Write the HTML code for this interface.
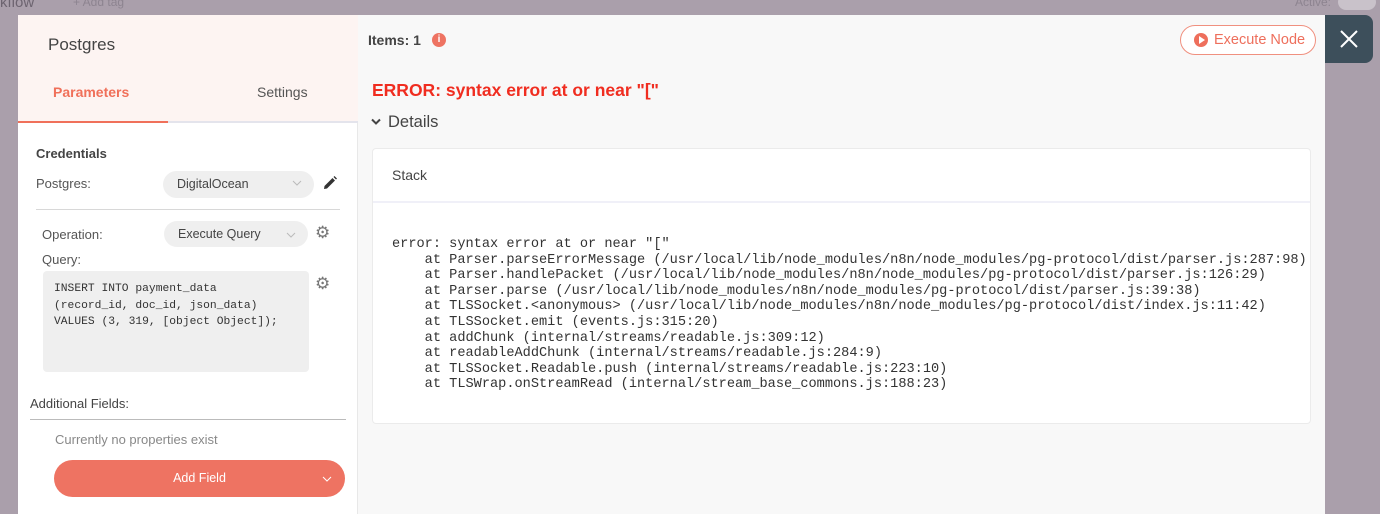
<!DOCTYPE html>
<html><head><meta charset="utf-8"><style>
*{box-sizing:border-box;margin:0;padding:0}
body{width:1380px;height:514px;overflow:hidden;background:#aa9fab;font-family:"Liberation Sans",sans-serif;position:relative;color:#444}
.abs{position:absolute}
.mono{font-family:"Liberation Mono",monospace}
</style></head><body>
<div class="abs" style="left:0;top:-6px;font-size:15px;color:#6d6470">kflow</div>
<div class="abs" style="left:73px;top:-5px;font-size:12px;color:#8d8490">+ Add tag</div>
<div class="abs" style="left:1295px;top:-5px;font-size:12px;color:#8d8490">Active:</div>
<div class="abs" style="left:1338px;top:-6px;width:38px;height:16px;border-radius:8px;background:#c9c2ca"></div>
<div class="abs" style="left:18px;top:15px;width:1307px;height:499px;background:#f8f8f8"></div>
<div class="abs" style="left:18px;top:15px;width:340px;height:499px;background:#fff;border-right:1px solid #e8e8e8"></div>
<div class="abs" style="left:18px;top:15px;width:340px;height:107px;background:#fdf4f2"></div>
<div class="abs" style="left:48px;top:35px;font-size:17px;color:#444">Postgres</div>
<div class="abs" style="left:53px;top:84px;font-size:14px;font-weight:bold;color:#f0705a">Parameters</div>
<div class="abs" style="left:257px;top:84px;font-size:14px;color:#555">Settings</div>
<div class="abs" style="left:18px;top:121px;width:340px;height:2px;background:#e4e4ec"></div>
<div class="abs" style="left:18px;top:121px;width:150px;height:2px;background:#f0705a"></div>
<div class="abs" style="left:36px;top:146px;font-size:13px;font-weight:bold;color:#444">Credentials</div>
<div class="abs" style="left:36px;top:176px;font-size:13px;color:#555">Postgres:</div>
<div class="abs" style="left:163px;top:171px;width:151px;height:27px;border-radius:14px;background:#efefef;font-size:12.5px;color:#444;padding:6px 14px">DigitalOcean<svg style="position:absolute;right:12px;top:9px" width="10" height="6"><path d="M1 1L5 5L9 1" stroke="#bbb" fill="none"/></svg></div>
<svg class="abs" style="left:323px;top:176px" width="14" height="14" viewBox="0 0 14 14"><path d="M1 13 L1.5 10 L9.5 2 L12 4.5 L4 12.5 Z M10.5 1 L11.5 0 L14 2.5 L13 3.5Z" fill="#333"/></svg>
<div class="abs" style="left:36px;top:209px;width:304px;height:1px;background:#d8d8d8"></div>
<div class="abs" style="left:42px;top:227px;font-size:13px;color:#555">Operation:</div>
<div class="abs" style="left:164px;top:221px;width:144px;height:26px;border-radius:13px;background:#efefef;font-size:12.5px;color:#444;padding:6px 14px">Execute Query<svg style="position:absolute;right:12px;top:11px" width="10" height="6"><path d="M1 1L5 5L9 1" stroke="#bbb" fill="none"/></svg></div>
<div class="abs" style="left:315px;top:223px;font-size:17px;color:#777">⚙</div>
<div class="abs" style="left:42px;top:252px;font-size:13px;color:#555">Query:</div>
<div class="abs mono" style="left:43px;top:271px;width:266px;height:101px;border-radius:4px;background:#efefef;font-size:11.3px;line-height:16.5px;color:#333;padding:10px 11px;white-space:pre">INSERT INTO payment_data
(record_id, doc_id, json_data)
VALUES (3, 319, [object Object]);</div>
<div class="abs" style="left:315px;top:274px;font-size:17px;color:#777">⚙</div>
<div class="abs" style="left:30px;top:396px;font-size:13px;color:#444">Additional Fields:</div>
<div class="abs" style="left:30px;top:419px;width:316px;height:1px;background:#bbb"></div>
<div class="abs" style="left:55px;top:432px;font-size:13px;color:#888">Currently no properties exist</div>
<div class="abs" style="left:54px;top:460px;width:291px;height:37px;border-radius:19px;background:#ee7362;color:#fff;font-size:12.5px;text-align:center;line-height:37px">Add Field<svg style="position:absolute;right:13px;top:16px" width="10" height="6"><path d="M1 1L5 5L9 1" stroke="#fff" fill="none"/></svg></div>
<div class="abs" style="left:368px;top:32px;font-size:14px;font-weight:bold;color:#444">Items: 1</div>
<div class="abs" style="left:432px;top:33px;width:14px;height:14px;border-radius:50%;background:#ee7362;color:#fff;font-size:10px;font-weight:bold;text-align:center;line-height:14px">i</div>
<div class="abs" style="left:1180px;top:25px;width:136px;height:30px;border:1px solid #f0907f;border-radius:15px;background:#fff;color:#ee6f5c;font-size:14.5px;padding:6px 0 0 33px">Execute Node</div>
<div class="abs" style="left:1194px;top:33px;width:14px;height:14px;border-radius:50%;background:#ee6f5c"></div>
<svg class="abs" style="left:1198px;top:36px" width="8" height="8"><path d="M1 0 L7 4 L1 8Z" fill="#fff"/></svg>
<div class="abs" style="left:1325px;top:15px;width:48px;height:48px;background:#3d4f5b;border-radius:0 8px 8px 0"></div>
<svg class="abs" style="left:1340px;top:30px" width="18" height="18"><path d="M1 1L17 17M17 1L1 17" stroke="#fff" stroke-width="2"/></svg>
<div class="abs" style="left:372px;top:80px;font-size:17.5px;font-weight:bold;color:#f02d20">ERROR: syntax error at or near "["</div>
<svg class="abs" style="left:371px;top:118px" width="10" height="8"><path d="M1 1.5L5 5.5L9 1.5" stroke="#444" stroke-width="2" fill="none"/></svg>
<div class="abs" style="left:388px;top:113px;font-size:16.5px;color:#444">Details</div>
<div class="abs" style="left:372px;top:148px;width:939px;height:276px;background:#fff;border:1px solid #ebebeb;border-radius:4px"></div>
<div class="abs" style="left:373px;top:201px;width:937px;height:2px;background:#f0f0f8"></div>
<div class="abs" style="left:392px;top:167px;font-size:14px;color:#444">Stack</div>
<div class="abs mono" style="left:392px;top:237px;font-size:13.62px;line-height:15.6px;color:#333;white-space:pre">error: syntax error at or near "["
    at Parser.parseErrorMessage (/usr/local/lib/node_modules/n8n/node_modules/pg-protocol/dist/parser.js:287:98)
    at Parser.handlePacket (/usr/local/lib/node_modules/n8n/node_modules/pg-protocol/dist/parser.js:126:29)
    at Parser.parse (/usr/local/lib/node_modules/n8n/node_modules/pg-protocol/dist/parser.js:39:38)
    at TLSSocket.&lt;anonymous&gt; (/usr/local/lib/node_modules/n8n/node_modules/pg-protocol/dist/index.js:11:42)
    at TLSSocket.emit (events.js:315:20)
    at addChunk (internal/streams/readable.js:309:12)
    at readableAddChunk (internal/streams/readable.js:284:9)
    at TLSSocket.Readable.push (internal/streams/readable.js:223:10)
    at TLSWrap.onStreamRead (internal/stream_base_commons.js:188:23)</div>
</body></html>
